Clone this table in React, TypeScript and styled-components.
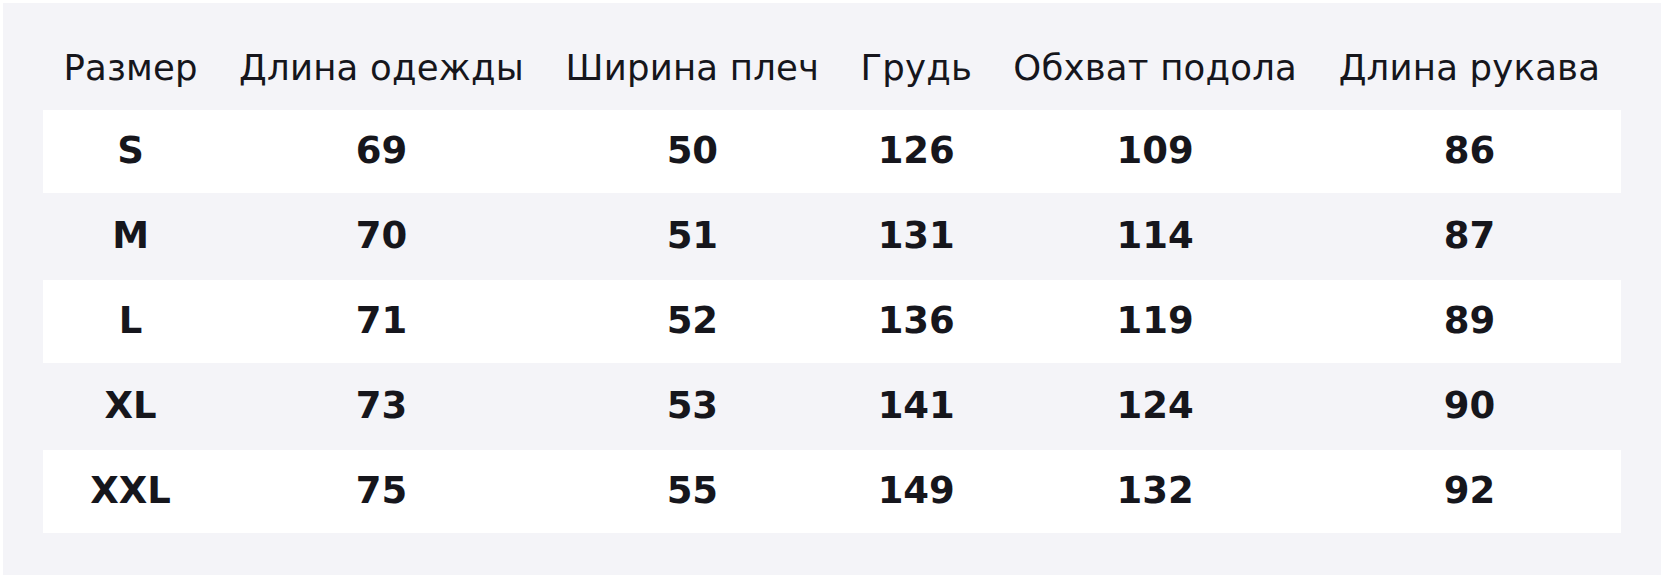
import { createGlobalStyle, styled } from "styled-components";

const GlobalStyle = createGlobalStyle`
  body {
    margin: 0;
    background: #ffffff;
    font-family: "DejaVu Sans", "Noto Sans", sans-serif;
    color: #16161c;
  }
`;

const headers = [
  "Размер",
  "Длина одежды",
  "Ширина плеч",
  "Грудь",
  "Обхват подола",
  "Длина рукава",
];

const rows = [
  ["S", "69", "50", "126", "109", "86"],
  ["M", "70", "51", "131", "114", "87"],
  ["L", "71", "52", "136", "119", "89"],
  ["XL", "73", "53", "141", "124", "90"],
  ["XXL", "75", "55", "149", "132", "92"],
];

const App = () => {
  return (
    <StyledPage>
      <GlobalStyle />
      <StyledPanel>
        <StyledTable>
          <thead>
            <tr>
              {headers.map((h) => (
                <StyledHeadCell key={h}>{h}</StyledHeadCell>
              ))}
            </tr>
          </thead>
          <tbody>
            {rows.map((row, i) => (
              <StyledRow key={row[0]} $striped={i % 2 === 0}>
                {row.map((cell, j) => (
                  <StyledCell key={j}>{cell}</StyledCell>
                ))}
              </StyledRow>
            ))}
          </tbody>
        </StyledTable>
      </StyledPanel>
    </StyledPage>
  );
};

export default App;

const StyledPage = styled.div`
  padding: 3px;
`;

const StyledPanel = styled.div`
  background: #f4f4f8;
  padding: 40px;
`;

const StyledTable = styled.table`
  width: 100%;
  border-collapse: collapse;
  line-height: 42px;
`;

const StyledHeadCell = styled.th`
  font-size: 35.5px;
  font-weight: 400;
  letter-spacing: 0.2px;
  padding: 4px 20px 21px;
  white-space: nowrap;
  text-align: center;
`;

const StyledRow = styled.tr<{ $striped: boolean }>`
  background: ${(p) => (p.$striped ? "#ffffff" : "transparent")};
  border-bottom: 2px solid #f4f4f8;
`;

const StyledCell = styled.td`
  font-size: 37px;
  font-weight: 700;
  padding: 20px 20px 21px;
  text-align: center;
  white-space: nowrap;
`;
